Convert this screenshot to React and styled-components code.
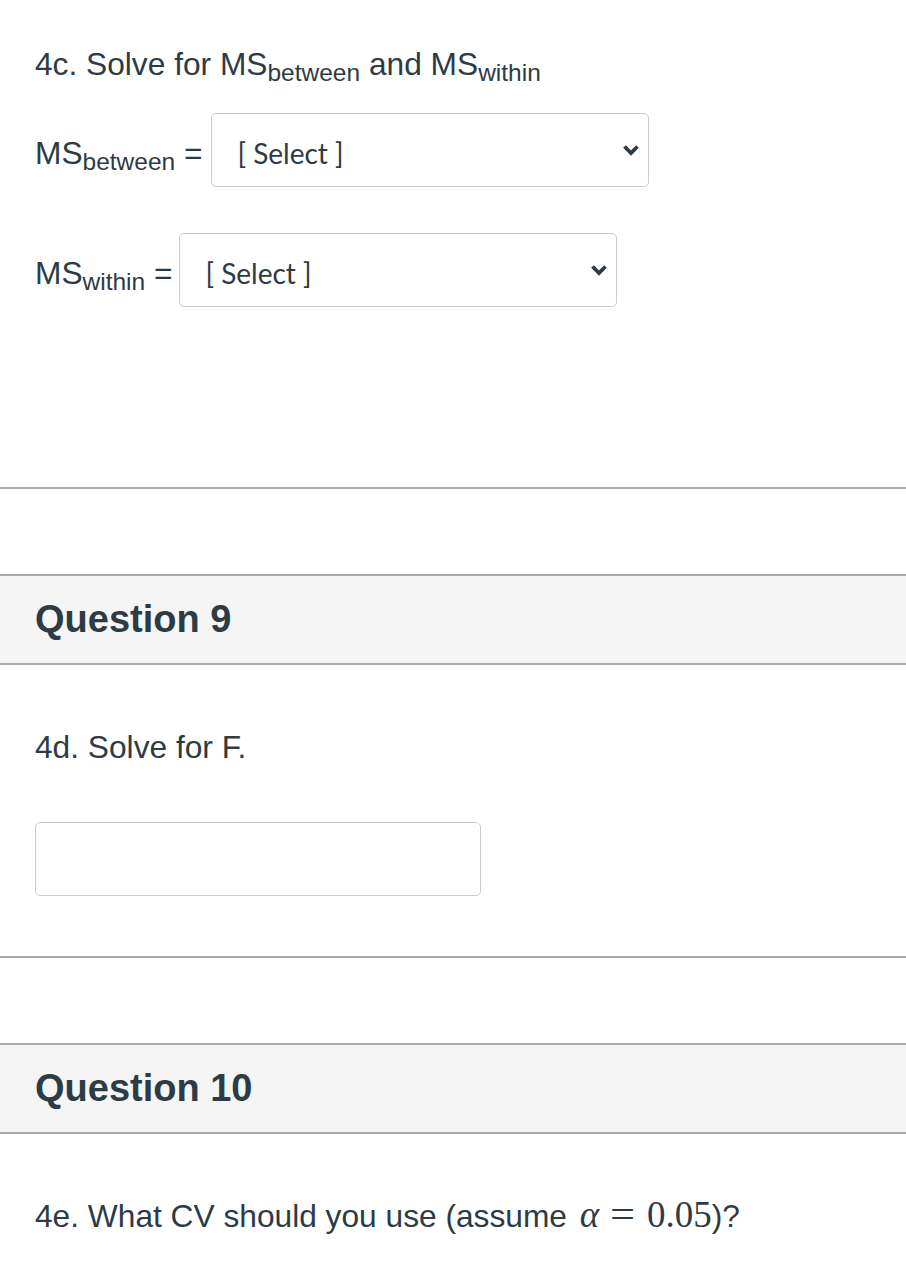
import React from 'react';
import styled, { createGlobalStyle } from 'styled-components';

const GlobalStyle = createGlobalStyle`
    body {
        margin: 0;
        background: #ffffff;
        color: #2d3b45;
        font-family: "Liberation Sans", Arial, sans-serif;
    }
`;

const Page = styled.div`
    display: flex;
    flex-direction: column;
    gap: 85px;
`;

// one question card: header strip (optional) + body, ruled top and bottom
const Question = styled.section`
    border-top: ${(p) => (p.$open ? 'none' : '2px solid #aaaaaa')};
    border-bottom: ${(p) => (p.$last ? 'none' : '2px solid #aaaaaa')};
`;

const Header = styled.header`
    height: 87px;
    display: flex;
    align-items: center;
    padding: 0 35px;
    background: #f5f5f5;
    border-bottom: 2px solid #aaaaaa;
`;

const Title = styled.h2`
    margin: 0;
    font-size: 38px;
    font-weight: 700;
    line-height: normal;
`;

const Body = styled.div`
    padding: ${(p) => p.$pad || '60px 35px 60px'};
`;

const Text = styled.p`
    margin: 0;
    font-size: 31.7px;
    line-height: 1.4;
`;

const Sub = styled.sub`
    font-size: 24.5px;
    line-height: 0;
    vertical-align: -6px;
`;

const Row = styled.div`
    display: flex;
    align-items: baseline;
    margin-top: ${(p) => p.$top}px;
`;

const Label = styled.span`
    font-size: 31.7px;
    margin-right: ${(p) => p.$gap}px;
    white-space: nowrap;
`;

const SelectBox = styled.div`
    box-sizing: border-box;
    width: 438px;
    height: 74px;
    display: flex;
    align-items: center;
    justify-content: space-between;
    padding: 6px 8px 0 25px;
    border: 1px solid #c7cdd1;
    border-radius: 5px;
    background: #ffffff;
    font-family: Lato, "Liberation Sans", sans-serif;
    font-size: 28px;
`;

const Chevron = styled.svg`
    width: 18px;
    height: 12px;
    margin-top: -6px;
`;

const AnswerInput = styled.div`
    box-sizing: border-box;
    width: 446px;
    height: 74px;
    margin-top: 52px;
    border: 1px solid #c7cdd1;
    border-radius: 5px;
    background: #ffffff;
`;

const MathSerif = styled.span`
    font-family: "Liberation Serif", "Times New Roman", serif;
    font-size: 37px;
    line-height: 0;
    font-style: ${(p) => (p.$italic ? 'italic' : 'normal')};
    margin: ${(p) => p.$space || '0'};
`;

const Equals = styled.span`
    display: inline-block;
    font-family: "Liberation Serif", "Times New Roman", serif;
    font-size: 37px;
    line-height: 0;
    margin: 0 14px 0 13px;
    transform: scaleX(1.2);
`;

const Select = () => (
    <SelectBox>
        <span>[ Select ]</span>
        <Chevron viewBox="0 0 18 12">
            <polyline points="2.5,2.5 9,9 15.5,2.5" fill="none" stroke="#2d3b45" strokeWidth="3.8" />
        </Chevron>
    </SelectBox>
);

export default function App() {
    return (
        <>
            <GlobalStyle />
            <Page>
                <Question $open>
                    <Body $pad="42px 35px 180px">
                        <Text>
                            4c. Solve for MS<Sub>between</Sub> and MS<Sub>within</Sub>
                        </Text>
                        <Row $top={27}>
                            <Label $gap={9}>MS<Sub>between</Sub> =</Label>
                            <Select />
                        </Row>
                        <Row $top={46}>
                            <Label $gap={7}>MS<Sub>within</Sub> =</Label>
                            <Select />
                        </Row>
                    </Body>
                </Question>

                <Question>
                    <Header>
                        <Title>Question 9</Title>
                    </Header>
                    <Body>
                        <Text>4d. Solve for F.</Text>
                        <AnswerInput />
                    </Body>
                </Question>

                <Question $last>
                    <Header>
                        <Title>Question 10</Title>
                    </Header>
                    <Body>
                        <Text>
                            4e. What CV should you use (assume{' '}
                            <MathSerif $italic $space="0 0 0 4px">α</MathSerif>
                            <Equals>=</Equals>
                            <MathSerif>0.05</MathSerif>)?
                        </Text>
                    </Body>
                </Question>
            </Page>
        </>
    );
}
